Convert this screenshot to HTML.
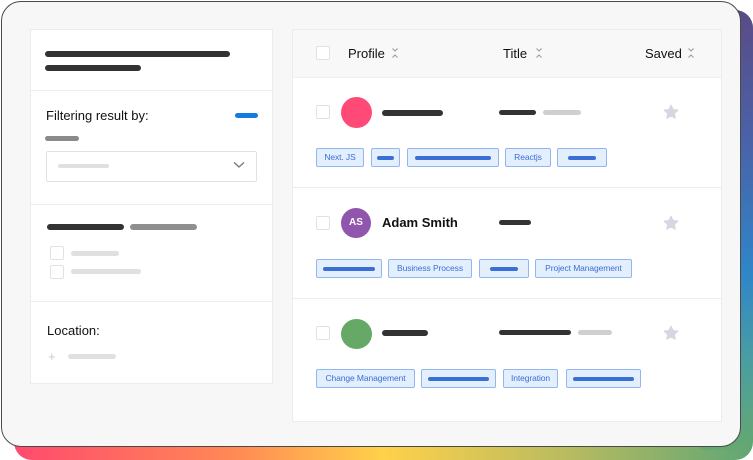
<!DOCTYPE html><html><head><style>
*{margin:0;padding:0;box-sizing:border-box}
body{width:753px;height:460px;overflow:hidden;background:#fff;font-family:"Liberation Sans",sans-serif;position:relative}
.a{position:absolute}
.bar{position:absolute;border-radius:3px}
.tag{position:absolute;height:19px;background:#e4effe;border:1px solid #92b6f0;border-radius:2px;color:#3a6fd6;font-size:8.5px;line-height:17px;text-align:center;white-space:nowrap;overflow:hidden;letter-spacing:-0.1px}
.tag i{display:block;height:4px;background:#3a6fd6;border-radius:2px;margin:7px 7px 0}
.cb{position:absolute;width:14px;height:14px;border:1px solid #e2e2e2;border-radius:2px;background:#fff}
.st{position:absolute;width:16px;height:16px}
</style></head><body>
<div class="a" style="left:14px;top:10px;width:739px;height:450px;border-radius:18px;background:linear-gradient(90deg,#ff4a6e 0%,#ff8a55 30%,#ffd14a 50%,#b8bb60 75%,#5fa675 100%)"></div>
<div class="a" style="left:700px;top:10px;width:53px;height:440px;border-radius:0 18px 18px 0;background:linear-gradient(180deg,#5a4c86 0%,#4a62a8 30%,#2f86c8 60%,#4b9ea0 80%,#66a870 100%)"></div>
<div class="a" style="left:1px;top:1px;width:740px;height:446px;border:1px solid #4a4a4a;border-radius:20px;background:#f7f7f7"></div>

<div class="a" style="left:30px;top:29px;width:243px;height:355px;background:#fff;border:1px solid #ececec"></div>
<div class="a" style="left:31px;top:90px;width:241px;height:1px;background:#ececec"></div>
<div class="a" style="left:31px;top:204px;width:241px;height:1px;background:#ececec"></div>
<div class="a" style="left:31px;top:301px;width:241px;height:1px;background:#ececec"></div>
<div class="bar" style="left:45px;top:51px;width:185px;height:6px;background:#333"></div>
<div class="bar" style="left:45px;top:65px;width:96px;height:6px;background:#333"></div>
<div class="a" style="left:46px;top:108px;font-size:13px;color:#111">Filtering result by:</div>
<div class="bar" style="left:235px;top:113px;width:23px;height:5px;background:#1479e0"></div>
<div class="bar" style="left:45px;top:136px;width:34px;height:5px;background:#8a8a8a"></div>
<div class="a" style="left:46px;top:151px;width:211px;height:31px;border:1px solid #e2e2e2;border-radius:2px"></div>
<div class="bar" style="left:58px;top:164px;width:51px;height:4px;background:#e0e0e0"></div>
<svg class="a" style="left:233px;top:161px" width="12" height="8"><path d="M1 1.5L6 6L11 1.5" stroke="#777" stroke-width="1.3" fill="none"/></svg>
<div class="bar" style="left:47px;top:224px;width:77px;height:6px;background:#333"></div>
<div class="bar" style="left:130px;top:224px;width:67px;height:6px;background:#8f8f8f"></div>
<div class="cb" style="left:50px;top:246px"></div>
<div class="cb" style="left:50px;top:265px"></div>
<div class="bar" style="left:71px;top:251px;width:48px;height:5px;background:#e0e0e0"></div>
<div class="bar" style="left:71px;top:269px;width:70px;height:5px;background:#e0e0e0"></div>
<div class="a" style="left:47px;top:323px;font-size:13px;color:#111">Location:</div>
<div class="a" style="left:48px;top:349px;font-size:13px;color:#ccc">+</div>
<div class="bar" style="left:68px;top:354px;width:48px;height:5px;background:#e0e0e0"></div>

<div class="a" style="left:292px;top:29px;width:430px;height:393px;background:#fff;border:1px solid #ececec"></div>
<div class="a" style="left:293px;top:30px;width:428px;height:47px;background:#f8f8f8"></div>
<div class="a" style="left:293px;top:77px;width:428px;height:1px;background:#f0f0f0"></div>
<div class="a" style="left:293px;top:187px;width:428px;height:1px;background:#ececec"></div>
<div class="a" style="left:293px;top:298px;width:428px;height:1px;background:#ececec"></div>
<div class="cb" style="left:316px;top:46px"></div>
<div class="a" style="left:348px;top:46px;font-size:13px;color:#111">Profile</div>
<div class="a" style="left:503px;top:46px;font-size:13px;color:#111">Title</div>
<div class="a" style="left:645px;top:46px;font-size:13px;color:#111">Saved</div>
<svg class="a" style="left:391px;top:47px" width="8" height="12"><path d="M1.5 1.5L4 4L6.5 1.5M1.5 10.5L4 8L6.5 10.5" stroke="#999" fill="none"/></svg>
<svg class="a" style="left:535px;top:47px" width="8" height="12"><path d="M1.5 1.5L4 4L6.5 1.5M1.5 10.5L4 8L6.5 10.5" stroke="#999" fill="none"/></svg>
<svg class="a" style="left:687px;top:47px" width="8" height="12"><path d="M1.5 1.5L4 4L6.5 1.5M1.5 10.5L4 8L6.5 10.5" stroke="#999" fill="none"/></svg>

<div class="cb" style="left:316px;top:105px"></div>
<div class="a" style="left:341px;top:97px;width:31px;height:31px;border-radius:50%;background:#ff4a78"></div>
<div class="bar" style="left:382px;top:110px;width:61px;height:6px;background:#333"></div>
<div class="bar" style="left:499px;top:110px;width:37px;height:5px;background:#333"></div>
<div class="bar" style="left:543px;top:110px;width:38px;height:5px;background:#cfcfcf"></div>
<svg class="st" style="left:663px;top:104px" viewBox="0 0 24 24"><path d="M12 2l3 6.5 7 .8-5.2 4.8 1.4 7L12 17.6 5.8 21.1l1.4-7L2 9.3l7-.8z" fill="#d5d8e0" stroke="#d5d8e0" stroke-linejoin="round" stroke-width="2"/></svg>
<div class="tag" style="left:316px;top:148px;width:48px">Next. JS</div>
<div class="tag" style="left:371px;top:148px;width:29px"><i style="margin:7px 5px 0"></i></div>
<div class="tag" style="left:407px;top:148px;width:92px"><i></i></div>
<div class="tag" style="left:505px;top:148px;width:46px">Reactjs</div>
<div class="tag" style="left:557px;top:148px;width:50px"><i style="margin:7px 10px 0"></i></div>

<div class="cb" style="left:316px;top:216px"></div>
<div class="a" style="left:341px;top:208px;width:30px;height:30px;border-radius:50%;background:#9056ad;color:#fff;font-size:10px;font-weight:bold;line-height:30px;text-align:center">AS</div>
<div class="a" style="left:382px;top:215px;font-size:13px;font-weight:bold;color:#111">Adam Smith</div>
<div class="bar" style="left:499px;top:220px;width:32px;height:5px;background:#333"></div>
<svg class="st" style="left:663px;top:215px" viewBox="0 0 24 24"><path d="M12 2l3 6.5 7 .8-5.2 4.8 1.4 7L12 17.6 5.8 21.1l1.4-7L2 9.3l7-.8z" fill="#d5d8e0" stroke="#d5d8e0" stroke-linejoin="round" stroke-width="2"/></svg>
<div class="tag" style="left:316px;top:259px;width:66px"><i style="margin:7px 6px 0"></i></div>
<div class="tag" style="left:388px;top:259px;width:84px">Business Process</div>
<div class="tag" style="left:479px;top:259px;width:50px"><i style="margin:7px 10px 0"></i></div>
<div class="tag" style="left:535px;top:259px;width:97px">Project Management</div>

<div class="cb" style="left:316px;top:326px"></div>
<div class="a" style="left:341px;top:319px;width:31px;height:30px;border-radius:50%;background:#66a866"></div>
<div class="bar" style="left:382px;top:330px;width:46px;height:6px;background:#333"></div>
<div class="bar" style="left:499px;top:330px;width:72px;height:5px;background:#333"></div>
<div class="bar" style="left:578px;top:330px;width:34px;height:5px;background:#cfcfcf"></div>
<svg class="st" style="left:663px;top:325px" viewBox="0 0 24 24"><path d="M12 2l3 6.5 7 .8-5.2 4.8 1.4 7L12 17.6 5.8 21.1l1.4-7L2 9.3l7-.8z" fill="#d5d8e0" stroke="#d5d8e0" stroke-linejoin="round" stroke-width="2"/></svg>
<div class="tag" style="left:316px;top:369px;width:99px">Change Management</div>
<div class="tag" style="left:421px;top:369px;width:75px"><i style="margin:7px 6px 0"></i></div>
<div class="tag" style="left:503px;top:369px;width:55px">Integration</div>
<div class="tag" style="left:566px;top:369px;width:75px"><i style="margin:7px 6px 0"></i></div>
</body></html>
